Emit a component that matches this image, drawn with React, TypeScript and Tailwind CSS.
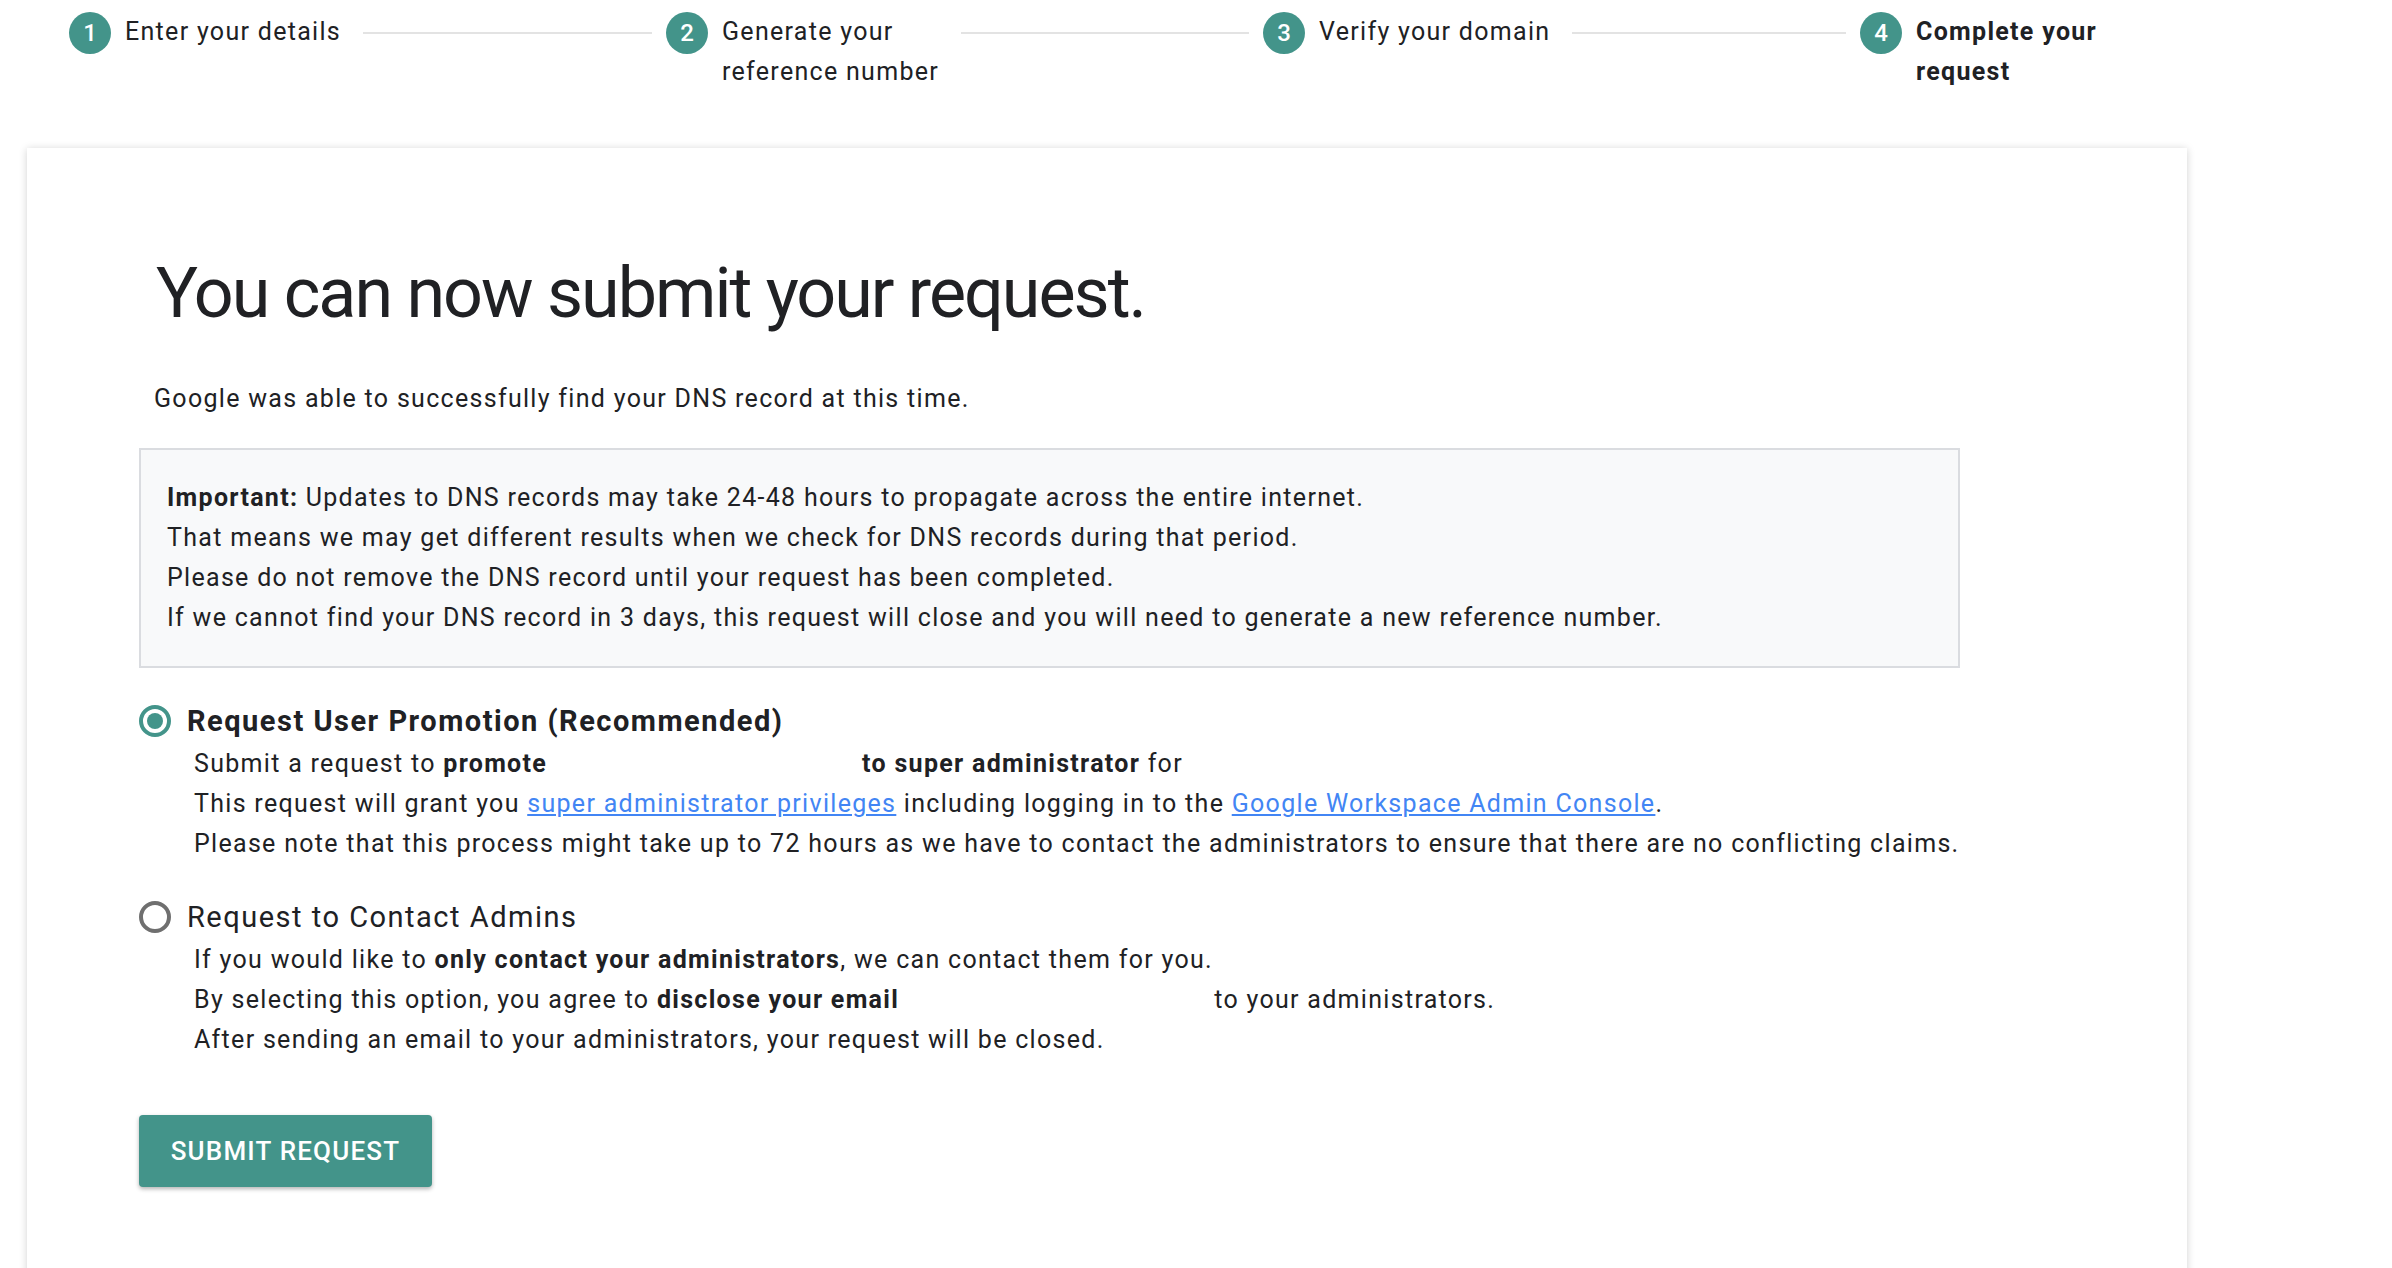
const teal = "bg-[#43948a]";

const Step = ({ n, children, bold, last }: { n: number; children: React.ReactNode; bold?: boolean; last?: boolean }) => (
	<div className={`flex items-start ${last ? "" : "w-[597px]"}`}>
		<div className={`${teal} flex h-[42px] w-[42px] shrink-0 items-center justify-center rounded-full text-[24px] font-medium text-white`}>{n}</div>
		<div className={`ml-[14px] whitespace-nowrap text-[25px] leading-[40px] tracking-[1.3px] ${bold ? "font-bold" : ""}`}>{children}</div>
		{!last && <div className="ml-[22px] mr-[14px] mt-[20px] h-[2px] flex-1 bg-[#e3e3e3]" />}
	</div>
);

const Radio = ({ checked }: { checked?: boolean }) => (
	<div
		className={`flex h-[32px] w-[32px] shrink-0 items-center justify-center rounded-full border-[4px] ${
			checked ? "border-[#43948a]" : "border-[#6f6f6f]"
		}`}
	>
		{checked && <div className="h-[16px] w-[16px] rounded-full bg-[#43948a]" />}
	</div>
);

const App = () => {
	return (
		<div className="min-h-screen bg-white font-['Roboto','Liberation_Sans',sans-serif] text-[#202124]">
			<div className="flex items-start pl-[69px] pt-[12px]">
				<Step n={1}>Enter your details</Step>
				<Step n={2}>
					Generate your
					<br />
					reference number
				</Step>
				<Step n={3}>Verify your domain</Step>
				<Step n={4} bold last>
					Complete your
					<br />
					request
				</Step>
			</div>

			<article className="ml-[27px] mt-[56px] w-[2160px] bg-white pb-[120px] pl-[112px] pt-[103px] shadow-[0_1px_8px_rgba(0,0,0,0.18)]">
				<h1 className="pl-[17px] text-[70px] leading-[84px] tracking-[-2px]">You can now submit your request.</h1>
				<p className="mt-[44px] pl-[15px] text-[25px] leading-[40px] tracking-[1.3px]">
					Google was able to successfully find your DNS record at this time.
				</p>

				<section className="mt-[29px] w-[1821px] border-[2px] border-[#dadce0] bg-[#f8f9fa] px-[26px] py-[28px] text-[25px] leading-[40px] tracking-[1.3px]">
					<div>
						<b>Important:</b> Updates to DNS records may take 24-48 hours to propagate across the entire internet.
					</div>
					<div>That means we may get different results when we check for DNS records during that period.</div>
					<div>Please do not remove the DNS record until your request has been completed.</div>
					<div>If we cannot find your DNS record in 3 days, this request will close and you will need to generate a new reference number.</div>
				</section>

				<section className="mt-[33px]">
					<div className="flex items-center gap-[16px]">
						<Radio checked />
						<span className="text-[29px] font-bold leading-[40px] tracking-[1.5px]">Request User Promotion (Recommended)</span>
					</div>
					<div className="mt-[3px] pl-[55px] text-[25px] leading-[40px] tracking-[1.3px]">
						<div>
							Submit a request to <b>promote</b> <span className="inline-block w-[300px]" /> <b>to super administrator</b> for
						</div>
						<div>
							This request will grant you{" "}
							<a className="text-[#4285f4] underline" href="#">
								super administrator privileges
							</a>{" "}
							including logging in to the{" "}
							<a className="text-[#4285f4] underline" href="#">
								Google Workspace Admin Console
							</a>
							.
						</div>
						<div>
							Please note that this process might take up to 72 hours as we have to contact the administrators to ensure that there are no
							conflicting claims.
						</div>
					</div>
				</section>

				<section className="mt-[33px]">
					<div className="flex items-center gap-[16px]">
						<Radio />
						<span className="text-[29px] leading-[40px] tracking-[1.5px]">Request to Contact Admins</span>
					</div>
					<div className="mt-[3px] pl-[55px] text-[25px] leading-[40px] tracking-[1.3px]">
						<div>
							If you would like to <b>only contact your administrators</b>, we can contact them for you.
						</div>
						<div>
							By selecting this option, you agree to <b>disclose your email</b> <span className="inline-block w-[300px]" /> to your
							administrators.
						</div>
						<div>After sending an email to your administrators, your request will be closed.</div>
					</div>
				</section>

				<button
					className={`${teal} mt-[55px] flex h-[72px] w-[293px] items-center justify-center rounded-[4px] text-[26px] font-medium tracking-[1.2px] text-white shadow-[0_2px_4px_rgba(0,0,0,0.3)]`}
				>
					SUBMIT REQUEST
				</button>
			</article>
		</div>
	);
};
export default App;
